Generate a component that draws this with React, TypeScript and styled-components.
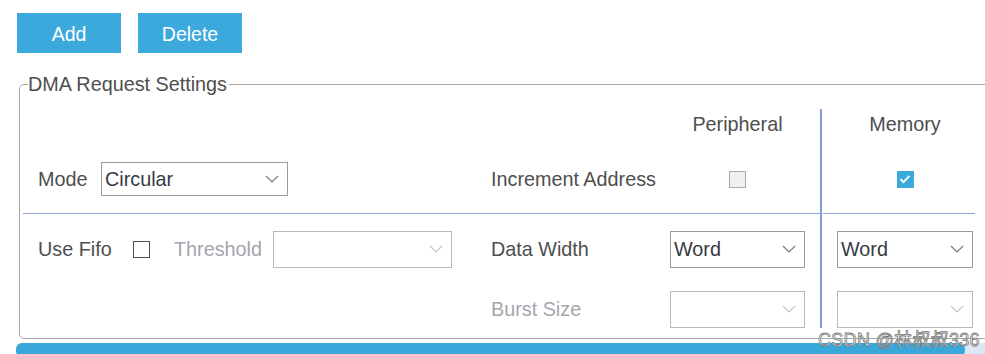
import React, { useState } from "react";
import styled, { createGlobalStyle } from "styled-components";

const GlobalStyle = createGlobalStyle`
    html, body {
        margin: 0;
        padding: 0;
        background: #ffffff;
        overflow: hidden;
    }
    body {
        font-family: "Liberation Sans", Arial, sans-serif;
        font-size: 19.8px;
        color: #4e4e4e;
    }
`;

const Page = styled.div`
    position: relative;
    width: 985px;
    height: 354px;
    overflow: hidden;
`;

const Toolbar = styled.div`
    display: flex;
    gap: 17px;
    padding: 13px 0 0 17px;
`;

const ActionButton = styled.button`
    width: 104px;
    height: 40px;
    border: none;
    border-radius: 0;
    background-color: #3ba9dc;
    color: #ffffff;
    font-family: inherit;
    font-size: 19.5px;
    padding: 2px 0 0;
`;

const Fieldset = styled.fieldset`
    margin: 20px 0 0 19px;
    width: 1010px;
    padding: 0 0 4px;
    border: 1px solid #a8a8a8;
    border-radius: 5px;
    box-sizing: border-box;
`;

const Legend = styled.legend`
    margin-left: 8px;
    padding: 0 2px 0 0;
    line-height: 22px;
    color: #4e4e4e;
`;

const Grid = styled.div`
    display: grid;
    grid-template-columns: 471px 179px 135px 32px 136px 1fr;
    grid-template-rows: 36px 68px 1px 70px 50px;
    padding-top: 14px;
`;

const ColHeader = styled.div<{ $col: number }>`
    grid-column: ${(p) => p.$col};
    grid-row: 1;
    text-align: center;
    line-height: 22px;
    margin-top: 4px;
`;

const Cell = styled.div<{ $col: number; $row: number; $center?: boolean }>`
    grid-column: ${(p) => p.$col};
    grid-row: ${(p) => p.$row};
    display: flex;
    align-items: center;
    justify-content: ${(p) => (p.$center ? "center" : "flex-start")};
    min-width: 0;
`;

const LeftCell = styled(Cell)`
    padding-left: 18px;
`;

const Label = styled.span<{ $w?: number; $muted?: boolean; $gapBefore?: number }>`
    width: ${(p) => (p.$w ? `${p.$w}px` : "auto")};
    margin-left: ${(p) => p.$gapBefore ?? 0}px;
    flex: none;
    color: ${(p) => (p.$muted ? "#a2a6ad" : "#4e4e4e")};
    white-space: nowrap;
`;

const HDivider = styled.div`
    grid-column: 1 / 6;
    grid-row: 3;
    margin: 0 -2px 0 3px;
    background: #8aa3d4;
`;

const VDivider = styled.div`
    grid-column: 4;
    grid-row: 1 / 6;
    justify-self: center;
    width: 2px;
    margin: 0 1px 6px 0;
    background: #7f9bd0;
    box-shadow: 1px 0 0 #ffffff;
    position: relative;
    z-index: 1;
`;

const SelectBox = styled.div<{ $w?: number; $h: number; $disabled?: boolean }>`
    display: flex;
    align-items: center;
    justify-content: space-between;
    box-sizing: border-box;
    width: ${(p) => (p.$w ? `${p.$w}px` : "100%")};
    height: ${(p) => p.$h}px;
    border: 1px solid ${(p) => (p.$disabled ? "#b9b9b9" : "#9c9c9c")};
    background: #ffffff;
    padding: 0 8px 0 3px;
    color: #353a45;
`;

const SelectText = styled.span`
    white-space: nowrap;
`;

const Chevron = styled.svg<{ $disabled?: boolean }>`
    width: 14px;
    height: 8px;
    flex: none;
    stroke: ${(p) => (p.$disabled ? "#c4c4c4" : "#7a7a7a")};
`;

const CheckBox = styled.span<{ $variant: "plain" | "soft" | "checked" }>`
    display: inline-flex;
    align-items: center;
    justify-content: center;
    flex: none;
    box-sizing: border-box;
    width: 17px;
    height: 17px;
    border: ${(p) =>
        p.$variant === "plain"
            ? "1.5px solid #505050"
            : p.$variant === "soft"
            ? "1px solid #aaaaaa"
            : "none"};
    background: ${(p) =>
        p.$variant === "checked" ? "#3ba9dc" : p.$variant === "soft" ? "#eef0f2" : "#ffffff"};
`;

const Scrollbar = styled.div`
    display: flex;
    margin-top: 4px;
    height: 14px;
`;

const Thumb = styled.div`
    width: 949px;
    margin-left: 16px;
    background: #38a7da;
    border-radius: 6px;
`;

const Track = styled.div`
    flex: 1;
    background: #dbe8f3;
`;

const Watermark = styled.div`
    position: absolute;
    left: 818px;
    top: 325px;
    font-family: "Liberation Sans", "Noto Sans CJK SC", sans-serif;
    font-size: 18px;
    color: rgba(255, 255, 255, 0.9);
    -webkit-text-stroke: 0.8px #7a7a7a;
    letter-spacing: 0.3px;
    white-space: nowrap;
`;

type SelectProps = { value?: string; w?: number; h: number; disabled?: boolean };

const Select: React.FC<SelectProps> = ({ value, w, h, disabled }) => (
    <SelectBox $w={w} $h={h} $disabled={disabled}>
        <SelectText>{value ?? ""}</SelectText>
        <Chevron $disabled={disabled} viewBox="0 0 14 8" fill="none" strokeWidth="1.2">
            <path d="M1 1l6 6 6-6" />
        </Chevron>
    </SelectBox>
);

const App: React.FC = () => {
    const [memInc] = useState(true);
    return (
        <Page>
            <GlobalStyle />
            <Toolbar>
                <ActionButton>Add</ActionButton>
                <ActionButton>Delete</ActionButton>
            </Toolbar>
            <Fieldset>
                <Legend>DMA Request Settings</Legend>
                <Grid>
                    <ColHeader $col={3}>Peripheral</ColHeader>
                    <ColHeader $col={5}>Memory</ColHeader>
                    <VDivider />

                    <LeftCell $col={1} $row={2}>
                        <Label $w={63}>Mode</Label>
                        <Select value="Circular" w={187} h={34} />
                    </LeftCell>
                    <Cell $col={2} $row={2}>
                        <Label>Increment Address</Label>
                    </Cell>
                    <Cell $col={3} $row={2} $center>
                        <CheckBox $variant="soft" />
                    </Cell>
                    <Cell $col={5} $row={2} $center>
                        <CheckBox $variant={memInc ? "checked" : "soft"}>
                            <svg width="12" height="10" viewBox="0 0 12 10" fill="none">
                                <path d="M1.5 5.2l3 3 6-6.4" stroke="#ffffff" strokeWidth="1.8" />
                            </svg>
                        </CheckBox>
                    </Cell>

                    <HDivider />

                    <LeftCell $col={1} $row={4}>
                        <Label $w={95}>Use Fifo</Label>
                        <CheckBox $variant="plain" />
                        <Label $w={99} $muted $gapBefore={24}>Threshold</Label>
                        <Select w={179} h={37} disabled />
                    </LeftCell>
                    <Cell $col={2} $row={4}>
                        <Label>Data Width</Label>
                    </Cell>
                    <Cell $col={3} $row={4}>
                        <Select value="Word" h={37} />
                    </Cell>
                    <Cell $col={5} $row={4}>
                        <Select value="Word" h={37} />
                    </Cell>

                    <Cell $col={2} $row={5}>
                        <Label $muted>Burst Size</Label>
                    </Cell>
                    <Cell $col={3} $row={5}>
                        <Select h={37} disabled />
                    </Cell>
                    <Cell $col={5} $row={5}>
                        <Select h={37} disabled />
                    </Cell>
                </Grid>
            </Fieldset>
            <Scrollbar>
                <Thumb />
                <Track />
            </Scrollbar>
            <Watermark>CSDN @林叔叔336</Watermark>
        </Page>
    );
};

export default App;
